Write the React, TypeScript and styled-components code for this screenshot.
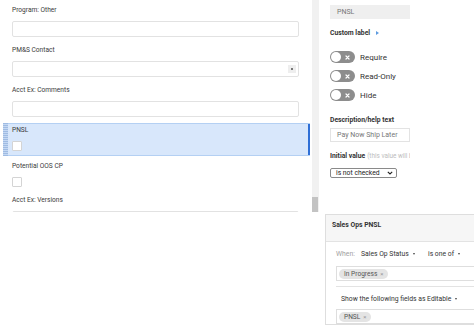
import React from 'react';
import styled, { createGlobalStyle } from 'styled-components';

const GlobalStyle = createGlobalStyle`
  html, body {
    margin: 0;
    padding: 0;
    background: #ffffff;
  }
  body {
    font-family: Roboto, "Liberation Sans", Arial, sans-serif;
    color: #333333;
  }
`;

const Page = styled.div`
  width: 474px;
  height: 325px;
  display: flex;
  overflow: hidden;
  background: #ffffff;
`;

/* ---------- left: field list ---------- */

const LeftPane = styled.div`
  width: 320px;
  flex-shrink: 0;
  display: flex;
  align-items: flex-start;
`;

const FieldList = styled.div`
  width: 311px;
  height: 212px;
  overflow: hidden;
`;

const Scrollbar = styled.div`
  width: 7px;
  height: 212px;
  margin-left: 1px;
  background: #f1f1f1;
  display: flex;
  flex-direction: column;
  justify-content: flex-end;
`;

const Thumb = styled.div`
  height: 15px;
  margin: 0 1px 0 0;
  background: #c3c3c3;
`;

const FieldRow = styled.div<{ $selected?: boolean; $tail?: number }>`
  position: relative;
  margin: 3px 1px 0 3px;
  padding: 3px 11px ${p => p.$tail ?? 3}px 9px;
  display: flex;
  flex-direction: column;
  gap: 7px;
  background: ${p => (p.$selected ? '#d8e7fb' : 'transparent')};
  box-shadow: ${p =>
    p.$selected
      ? 'inset 0 1px 0 #b4d0f3, inset 0 -1px 0 #b4d0f3, inset -2px 0 0 #2f6fd6'
      : 'none'};
`;

const Grip = styled.span`
  position: absolute;
  left: 0;
  top: 0;
  bottom: 0;
  width: 5px;
  background: repeating-linear-gradient(
    to bottom,
    #9fbbe2 0px,
    #9fbbe2 1px,
    #c4d8f3 1px,
    #c4d8f3 2px
  );
`;

const FieldLabel = styled.div`
  font-size: 6.6px;
  line-height: 8px;
  height: 8px;
  color: #3a3a3a;
  white-space: nowrap;
`;

const TextBox = styled.div`
  position: relative;
  height: 14px;
  border: 1px solid #e2e2e2;
  border-radius: 2px;
  background: #ffffff;
`;

const SelectStub = styled.span`
  position: absolute;
  right: 2px;
  top: 3px;
  width: 8px;
  height: 8px;
  background: #eeeeee;
  display: flex;
  align-items: center;
  justify-content: center;
  &::after {
    content: '';
    width: 2px;
    height: 2px;
    background: #777777;
  }
`;

const CheckBox = styled.span`
  width: 8px;
  height: 8px;
  border: 1px solid #d4d4d4;
  border-radius: 1px;
  background: #ffffff;
`;

/* ---------- right: properties ---------- */

const RightPane = styled.div`
  flex: 1;
  display: flex;
  flex-direction: column;
  min-width: 0;
`;

const Props = styled.div`
  width: 80px;
  padding: 5px 0 0 10px;
  display: flex;
  flex-direction: column;
  overflow: hidden;
`;

const PropInput = styled.div<{ $readOnly?: boolean; $top?: number }>`
  margin-top: ${p => p.$top ?? 0}px;
  height: 15px;
  box-sizing: border-box;
  padding-left: 6px;
  display: flex;
  align-items: center;
  font-size: 7px;
  color: #777777;
  white-space: nowrap;
  background: ${p => (p.$readOnly ? '#efefef' : '#ffffff')};
  border: 1px solid ${p => (p.$readOnly ? '#efefef' : '#e3e3e3')};
`;

const PropLabel = styled.div<{ $top: number }>`
  margin-top: ${p => p.$top}px;
  font-size: 6.8px;
  line-height: 8px;
  font-weight: 700;
  color: #333333;
  white-space: nowrap;
  display: flex;
  align-items: center;
`;

const Hint = styled.span`
  font-weight: 400;
  font-size: 6.4px;
  color: #bdbdbd;
  margin-left: 2px;
`;

const BlueCaret = styled.span`
  margin-left: 6px;
  width: 0;
  height: 0;
  border-top: 2px solid transparent;
  border-bottom: 2px solid transparent;
  border-left: 3px solid #5d9be0;
`;

const ToggleList = styled.div`
  margin-top: 14px;
  display: flex;
  flex-direction: column;
  gap: 7px;
`;

const ToggleRow = styled.div`
  display: flex;
  align-items: center;
  gap: 5px;
  height: 12px;
  font-size: 8px;
  color: #333333;
  white-space: nowrap;
`;

const Toggle = styled.span`
  position: relative;
  width: 25px;
  height: 12px;
  border-radius: 6px;
  background: #8d8d8d;
  flex-shrink: 0;
  display: flex;
  align-items: center;
  justify-content: flex-end;
  padding-right: 5px;
  box-sizing: border-box;
`;

const Knob = styled.span`
  position: absolute;
  left: 1px;
  top: 1px;
  width: 10px;
  height: 10px;
  border-radius: 50%;
  background: #ffffff;
`;

const Dropdown = styled.div`
  margin-top: 8px;
  width: 67px;
  height: 10px;
  box-sizing: border-box;
  border: 1px solid #8a8a8a;
  border-radius: 2px;
  padding: 0 3px 0 5px;
  display: flex;
  align-items: center;
  justify-content: space-between;
  font-size: 6.8px;
  color: #222222;
  white-space: nowrap;
`;

const Card = styled.div`
  margin: 36px 0 0 5px;
  width: 200px;
  border: 1px solid #dedede;
  border-right: none;
  background: #ffffff;
`;

const CardHeader = styled.div`
  height: 27px;
  box-sizing: border-box;
  padding: 6px 0 0 6px;
  background: #f6f6f6;
  border-bottom: 1px solid #e3e3e3;
  font-size: 6.8px;
  line-height: 8px;
  font-weight: 700;
  color: #333333;
`;

const CardBody = styled.div`
  padding: 8px 0 0 10px;
  display: flex;
  flex-direction: column;
`;

const RuleLine = styled.div<{ $top?: number; $indent?: number }>`
  margin-top: ${p => p.$top ?? 0}px;
  padding-left: ${p => p.$indent ?? 0}px;
  display: flex;
  align-items: center;
  height: 8px;
  font-size: 6.8px;
  color: #333333;
  white-space: nowrap;
`;

const Muted = styled.span`
  color: #a0a0a0;
  width: 25px;
`;

const Picker = styled.span<{ $width?: number }>`
  display: inline-flex;
  align-items: center;
  gap: 4px;
  width: ${p => (p.$width ? `${p.$width}px` : 'auto')};
`;

const Caret = styled.span`
  width: 0;
  height: 0;
  border-left: 1.5px solid transparent;
  border-right: 1.5px solid transparent;
  border-top: 2px solid #444444;
`;

const TagBox = styled.div<{ $top: number }>`
  margin-top: ${p => p.$top}px;
  height: 13px;
  border: 1px solid #dedede;
  border-right: none;
  display: flex;
  align-items: center;
  padding-left: 2px;
`;

const Tag = styled.span`
  height: 10px;
  padding: 0 4px 0 5px;
  border-radius: 5px;
  background: #e4e4e4;
  display: inline-flex;
  align-items: center;
  gap: 3px;
  font-size: 6.6px;
  color: #555555;
  white-space: nowrap;
`;

const TagX = styled.span`
  font-size: 6px;
  color: #999999;
`;

const Divider = styled.div`
  margin-top: 5px;
  height: 1px;
  background: #e3e3e3;
`;

const SmallX = () => (
  <svg width="5" height="5" viewBox="0 0 10 10">
    <path d="M2 2 L8 8 M8 2 L2 8" stroke="#ffffff" strokeWidth="2.4" strokeLinecap="round" />
  </svg>
);

const fields: { label: string; kind: 'text' | 'select' | 'check'; selected?: boolean }[] = [
  { label: 'Program: Other', kind: 'text' },
  { label: 'PM&S Contact', kind: 'select' },
  { label: 'Acct Ex: Comments', kind: 'text' },
  { label: 'PNSL', kind: 'check', selected: true },
  { label: 'Potential OOS CP', kind: 'check' },
  { label: 'Acct Ex: Versions', kind: 'text' },
];

const toggles = ['Require', 'Read-Only', 'Hide'];

export default function App() {
  return (
    <Page>
      <GlobalStyle />
      <LeftPane>
        <FieldList>
          {fields.map(f => (
            <FieldRow key={f.label} $selected={f.selected} $tail={f.selected ? 5 : 3}>
              {f.selected && <Grip />}
              <FieldLabel>{f.label}</FieldLabel>
              {f.kind === 'check' ? (
                <CheckBox />
              ) : (
                <TextBox>{f.kind === 'select' && <SelectStub />}</TextBox>
              )}
            </FieldRow>
          ))}
        </FieldList>
        <Scrollbar>
          <Thumb />
        </Scrollbar>
      </LeftPane>

      <RightPane>
        <Props>
          <PropInput $readOnly>PNSL</PropInput>
          <PropLabel $top={10}>
            Custom label
            <BlueCaret />
          </PropLabel>
          <ToggleList>
            {toggles.map(t => (
              <ToggleRow key={t}>
                <Toggle>
                  <Knob />
                  <SmallX />
                </Toggle>
                {t}
              </ToggleRow>
            ))}
          </ToggleList>
          <PropLabel $top={15}>Description/help text</PropLabel>
          <PropInput $top={4}>Pay Now Ship Later</PropInput>
          <PropLabel $top={10}>
            Initial value<Hint>(this value will be used)</Hint>
          </PropLabel>
          <Dropdown>
            is not checked
            <svg width="6" height="4" viewBox="0 0 6 4">
              <path d="M0.8 0.8 L3 3 L5.2 0.8" stroke="#222" strokeWidth="1.1" fill="none" />
            </svg>
          </Dropdown>
        </Props>

        <Card>
          <CardHeader>Sales Ops PNSL</CardHeader>
          <CardBody>
            <RuleLine>
              <Muted>When:</Muted>
              <Picker $width={67}>
                Sales Op Status <Caret />
              </Picker>
              <Picker>
                is one of <Caret />
              </Picker>
            </RuleLine>
            <TagBox $top={8}>
              <Tag>
                In Progress<TagX>×</TagX>
              </Tag>
            </TagBox>
            <Divider />
            <RuleLine $top={8} $indent={5}>
              <Picker>
                Show the following fields as Editable <Caret />
              </Picker>
            </RuleLine>
            <TagBox $top={6}>
              <Tag>
                PNSL<TagX>×</TagX>
              </Tag>
            </TagBox>
          </CardBody>
        </Card>
      </RightPane>
    </Page>
  );
}
